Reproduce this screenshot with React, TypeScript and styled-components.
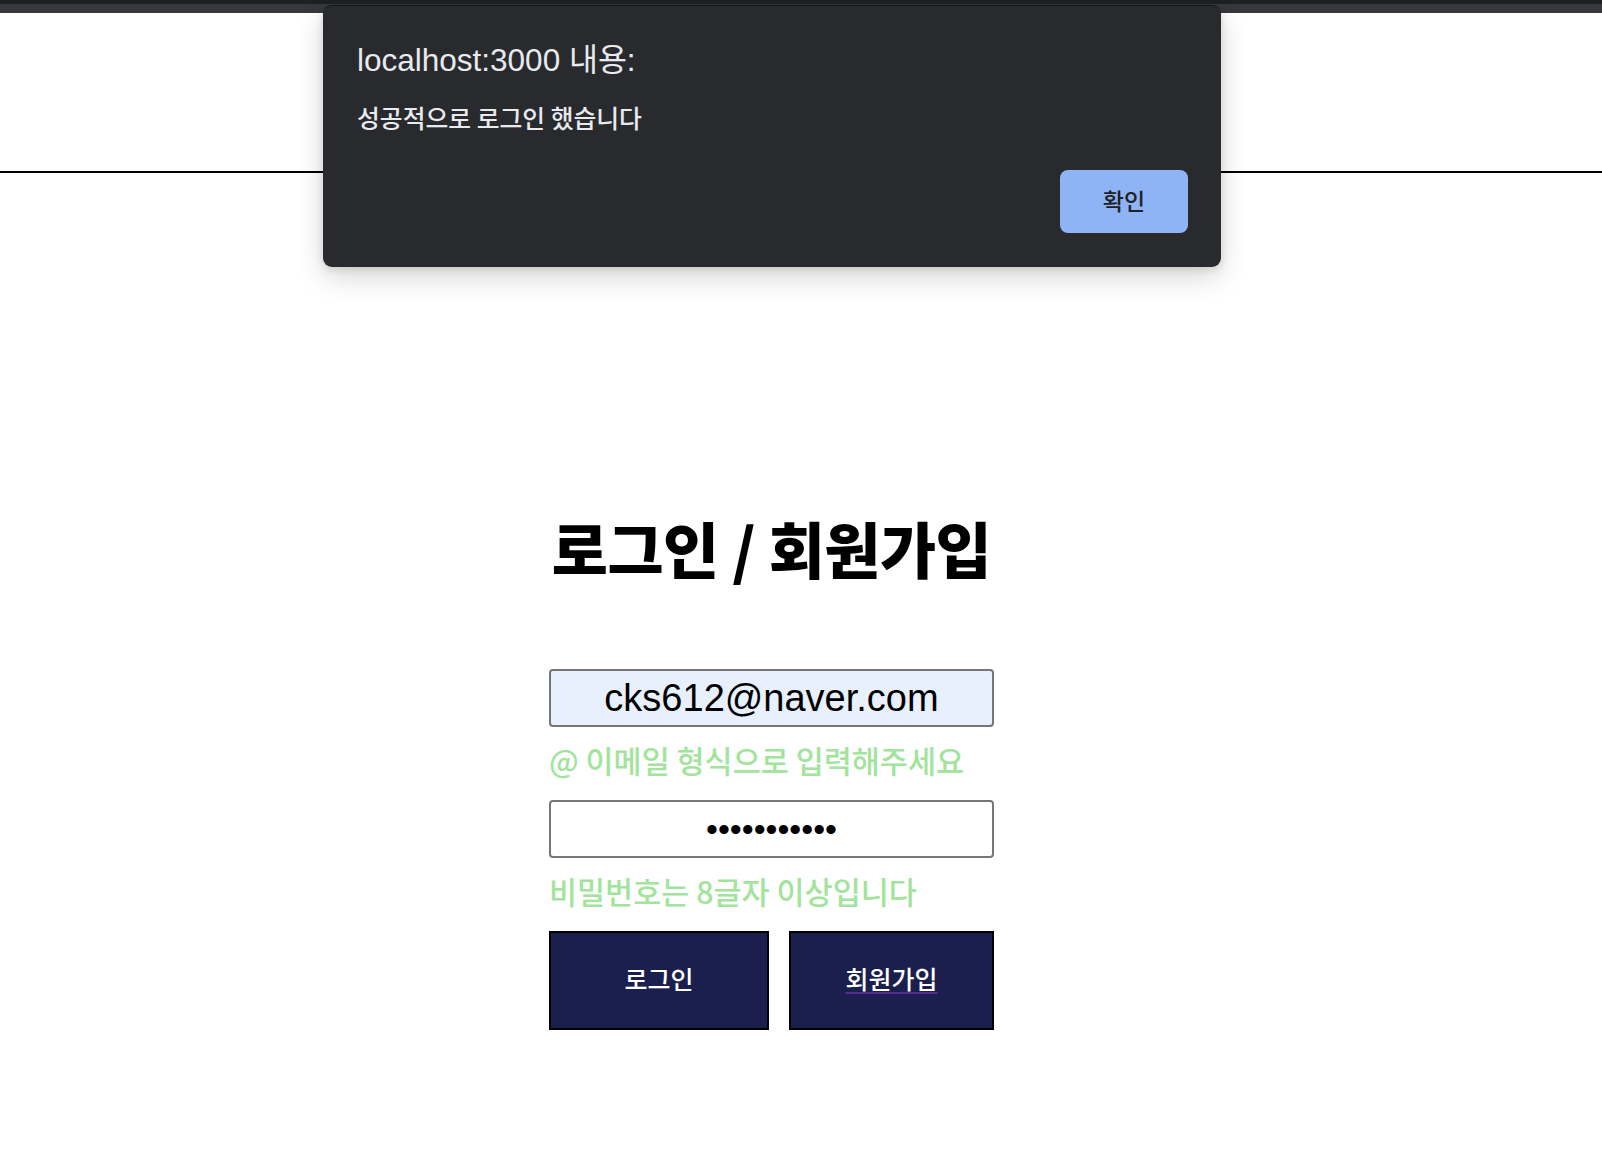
import React from 'react'
import styled, { createGlobalStyle } from 'styled-components'

const GlobalStyle = createGlobalStyle`
  html, body {
    margin: 0;
    padding: 0;
    background: #ffffff;
  }
  body {
    font-family: 'Noto Sans CJK KR', 'Noto Sans', sans-serif;
  }
`

const Page = styled.div`
  position: relative;
  width: 1602px;
  height: 1160px;
  overflow: hidden;
  background: #ffffff;
`

// strip of browser chrome visible at the very top of the capture
const BrowserStrip = styled.div`
  height: 13px;
  box-sizing: border-box;
  border-top: 4px solid #1f2023;
  background: #37383b;
`

const Header = styled.header`
  height: 158px;
  border-bottom: 2px solid #000000;
`

const Main = styled.main`
  display: flex;
  justify-content: center;
  padding: 339px 59px 0 0;
`

const Column = styled.section`
  width: 445px;
  display: flex;
  flex-direction: column;
`

const Title = styled.h1`
  margin: 0 -20px 85px;
  font-size: 61px;
  line-height: 72px;
  font-weight: 900;
  text-align: center;
  color: #000000;
  letter-spacing: -0.5px;
`

const Field = styled.input<{ $autofilled?: boolean; $size: number }>`
  width: 100%;
  height: 58px;
  box-sizing: border-box;
  border: 2px solid #767676;
  border-radius: 4px;
  background: ${({ $autofilled }) => ($autofilled ? '#e8f0fe' : '#ffffff')};
  color: #000000;
  font-family: 'Liberation Sans', Arial, sans-serif;
  font-size: ${({ $size }) => $size}px;
  text-align: center;
  padding: 0 8px;
  outline: none;
`

const Hint = styled.p`
  margin: 15px 0 22px;
  font-size: 30.5px;
  line-height: 36px;
  font-weight: 500;
  color: #a2e49c;
`

const ButtonRow = styled.div`
  display: flex;
  gap: 20px;
`

const ActionButton = styled.button<{ $width: number }>`
  width: ${({ $width }) => $width}px;
  height: 99px;
  box-sizing: border-box;
  border: 2px solid #000000;
  background: #1b1f4e;
  color: #ffffff;
  font-family: 'Noto Sans CJK KR', sans-serif;
  font-size: 25px;
  font-weight: 500;
  padding: 0 0 6px;
  cursor: pointer;
`

const VisitedLink = styled.span`
  color: #ffffff;
  text-decoration: underline;
  text-decoration-color: #5a2a94;
  text-decoration-thickness: 2px;
  text-underline-offset: 3px;
`

const AlertDialog = styled.div`
  position: absolute;
  left: 323px;
  top: 5px;
  width: 898px;
  height: 262px;
  box-sizing: border-box;
  padding: 36px 33px 34px 34px;
  display: flex;
  flex-direction: column;
  background: #292a2d;
  border-radius: 9px;
  border-top: 1px solid #151517;
  box-shadow: 0 10px 28px rgba(0, 0, 0, 0.16), 0 2px 8px rgba(0, 0, 0, 0.12);
`

const AlertTitle = styled.div`
  font-family: 'Liberation Sans', 'Noto Sans CJK KR', sans-serif;
  font-size: 31.5px;
  line-height: 36px;
  color: #e8eaed;
`

const AlertMessage = styled.div`
  margin-top: 23px;
  font-size: 24.8px;
  line-height: 32px;
  font-weight: 500;
  color: #e8eaed;
`

const AlertFooter = styled.div`
  margin-top: auto;
  display: flex;
  justify-content: flex-end;
`

const ConfirmButton = styled.button`
  width: 128px;
  height: 63px;
  border: none;
  border-radius: 8px;
  background: #8fb4f5;
  color: #202124;
  font-family: 'Noto Sans CJK KR', sans-serif;
  font-size: 23px;
  font-weight: 500;
  padding: 0 0 4px;
`

export default function App() {
  return (
    <Page>
      <GlobalStyle />
      <BrowserStrip />
      <Header />
      <Main>
        <Column>
          <Title>로그인 / 회원가입</Title>
          <Field $autofilled $size={38} type="email" defaultValue="cks612@naver.com" readOnly />
          <Hint>@ 이메일 형식으로 입력해주세요</Hint>
          <Field $size={34} type="password" defaultValue="12345678901" readOnly />
          <Hint>비밀번호는 8글자 이상입니다</Hint>
          <ButtonRow>
            <ActionButton $width={220}>로그인</ActionButton>
            <ActionButton $width={205}>
              <VisitedLink>회원가입</VisitedLink>
            </ActionButton>
          </ButtonRow>
        </Column>
      </Main>
      <AlertDialog role="alertdialog">
        <AlertTitle>localhost:3000 내용:</AlertTitle>
        <AlertMessage>성공적으로 로그인 했습니다</AlertMessage>
        <AlertFooter>
          <ConfirmButton>확인</ConfirmButton>
        </AlertFooter>
      </AlertDialog>
    </Page>
  )
}
